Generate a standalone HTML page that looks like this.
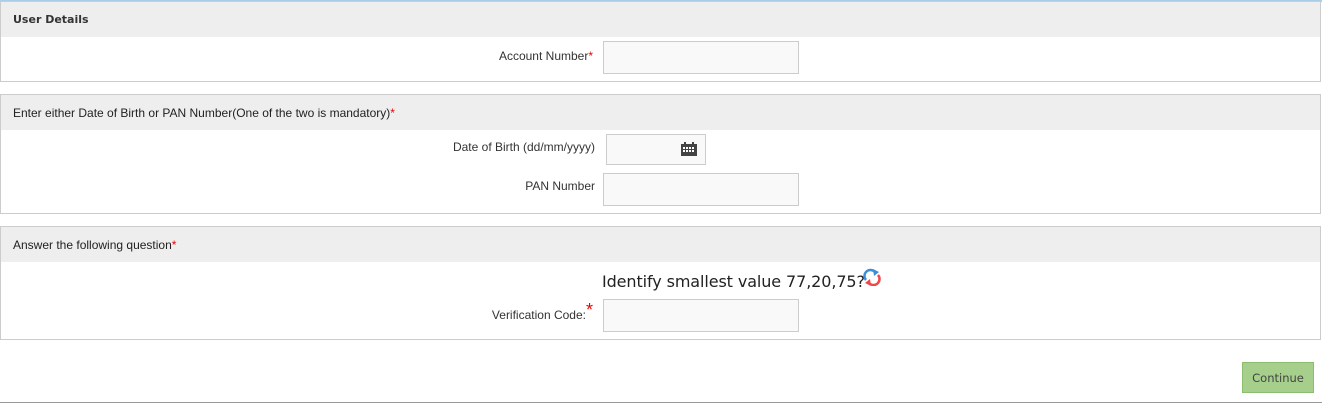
<!DOCTYPE html><html><head><style>
body{margin:0;width:1332px;height:406px;background:#fff;position:relative;overflow:hidden;font-family:"Liberation Sans",Arial,sans-serif;font-size:12px;color:#333}
.p{position:absolute;left:0;width:1319px;border:1px solid #ccc;background:#fff}
.h{background:#eee;height:35px;line-height:36px;padding-left:12px;font-size:12px;color:#222}
.l{position:absolute;text-align:right;font-size:12px;color:#333}
.i{position:absolute;border:1px solid #ccc;background:#f9f9f9;height:31px;width:194px}
.r{color:#e00}
</style></head><body>
<div style="position:absolute;left:0;top:0;width:1322px;height:2px;background:#a9cfe8"></div>
<div class="p" style="top:1px;height:79px"><div class="h" style="font-family:'DejaVu Sans',sans-serif;font-size:11px;font-weight:bold;color:#333">User Details</div></div>
<div class="l" style="left:400px;width:193px;top:49px">Account Number<span class="r">*</span></div>
<div class="i" style="left:603px;top:41px"></div>

<div class="p" style="top:94px;height:118px"><div class="h">Enter either Date of Birth or PAN Number(One of the two is mandatory)<span class="r">*</span></div></div>
<div class="l" style="left:400px;width:195px;top:140px">Date of Birth (dd/mm/yyyy)</div>
<div class="i" style="left:606px;top:134px;width:98px;height:29px"></div>
<svg style="position:absolute;left:681px;top:142px" width="16" height="14" viewBox="0 0 16 14"><rect x="0" y="2" width="16" height="12" fill="#444"/><rect x="3" y="0" width="2" height="4" fill="#444"/><rect x="11" y="0" width="2" height="4" fill="#444"/><g fill="#fff"><rect x="2" y="5" width="2" height="2"/><rect x="5" y="5" width="2" height="2"/><rect x="8" y="5" width="2" height="2"/><rect x="11" y="5" width="2" height="2"/><rect x="2" y="8" width="2" height="2"/><rect x="5" y="8" width="2" height="2"/><rect x="8" y="8" width="2" height="2"/><rect x="11" y="8" width="2" height="2"/></g></svg>
<div class="l" style="left:400px;width:195px;top:179px">PAN Number</div>
<div class="i" style="left:603px;top:173px"></div>

<div class="p" style="top:226px;height:112px"><div class="h">Answer the following question<span class="r">*</span></div></div>
<div style="position:absolute;left:602px;top:272px;font-family:'DejaVu Sans',sans-serif;font-size:16px;color:#222;letter-spacing:-0.1px">Identify smallest value 77,20,75?</div>
<svg style="position:absolute;left:862px;top:268px" width="20" height="18" viewBox="0 0 20 18"><path d="M4 12A6 6 0 0 1 13 4" stroke="#3a8fd8" stroke-width="2.5" fill="none"/><path d="M11 1l6 3-5 4z" fill="#3a8fd8"/><path d="M16 7A6 6 0 0 1 7 15" stroke="#f04848" stroke-width="2.5" fill="none"/><path d="M9 18l-6-3 5-4z" fill="#f04848"/></svg>
<div class="l" style="left:400px;width:193px;top:308px;line-height:14px">Verification Code:<span class="r" style="font-size:18px;position:relative;top:-3px;line-height:10px">*</span></div>
<div class="i" style="left:603px;top:299px"></div>

<div style="position:absolute;left:1242px;top:362px;width:70px;height:29px;background:#a5cf8b;border:1px solid #8bbd6e;text-align:center;line-height:30px;font-family:'DejaVu Sans',sans-serif;font-size:11.5px;color:#444">Continue</div>
<div style="position:absolute;left:0;top:402px;width:1322px;height:1px;background:#999"></div>
</body></html>
